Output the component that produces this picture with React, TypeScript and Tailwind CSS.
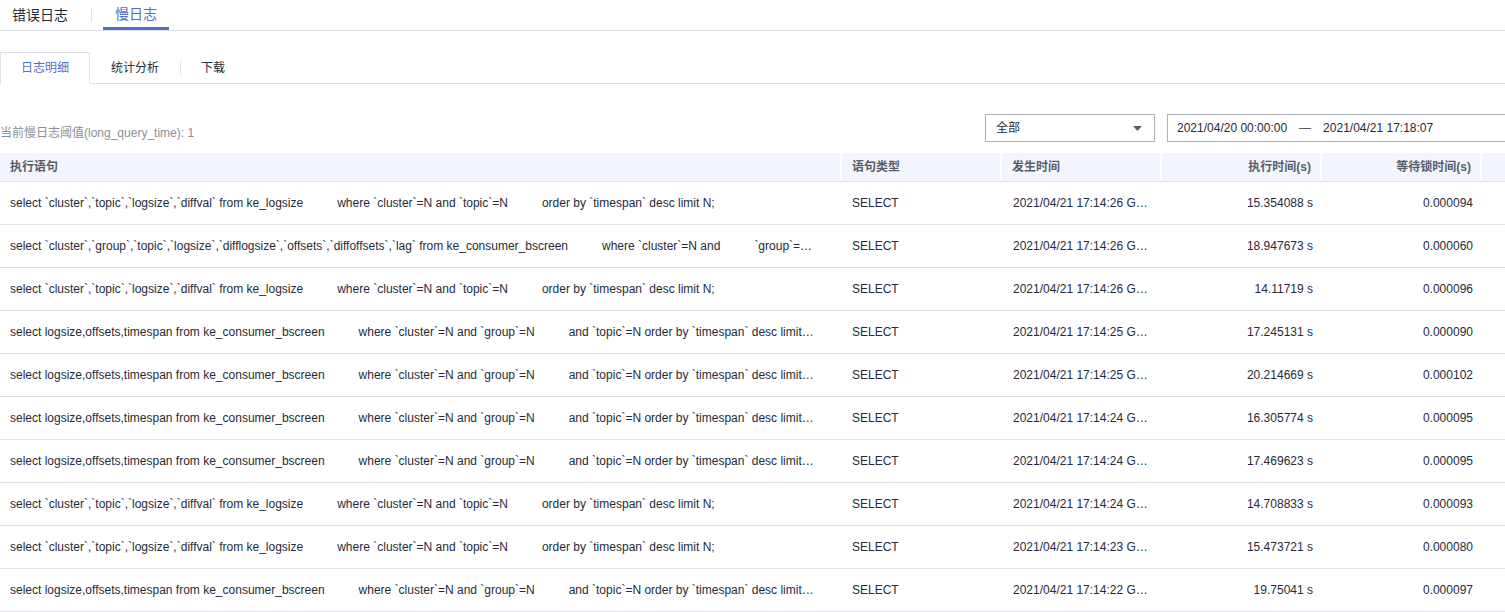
import React from 'react'

const A = [
  'select `cluster`,`topic`,`logsize`,`diffval` from ke_logsize',
  'where `cluster`=N and `topic`=N',
  'order by `timespan` desc limit N;',
]
const B = [
  'select `cluster`,`group`,`topic`,`logsize`,`difflogsize`,`offsets`,`diffoffsets`,`lag` from ke_consumer_bscreen',
  'where `cluster`=N and',
  '`group`=N and',
  '`topic`=N order by `timespan` desc limit N;',
]
const C = [
  'select logsize,offsets,timespan from ke_consumer_bscreen',
  'where `cluster`=N and `group`=N',
  'and `topic`=N order by `timespan` desc limit N;',
]

const rows = [
  { sql: A, time: '17:14:26', exec: '15.354088 s', lock: '0.000094' },
  { sql: B, time: '17:14:26', exec: '18.947673 s', lock: '0.000060' },
  { sql: A, time: '17:14:26', exec: '14.11719 s', lock: '0.000096' },
  { sql: C, time: '17:14:25', exec: '17.245131 s', lock: '0.000090' },
  { sql: C, time: '17:14:25', exec: '20.214669 s', lock: '0.000102' },
  { sql: C, time: '17:14:24', exec: '16.305774 s', lock: '0.000095' },
  { sql: C, time: '17:14:24', exec: '17.469623 s', lock: '0.000095' },
  { sql: A, time: '17:14:24', exec: '14.708833 s', lock: '0.000093' },
  { sql: A, time: '17:14:23', exec: '15.473721 s', lock: '0.000080' },
  { sql: C, time: '17:14:22', exec: '19.75041 s', lock: '0.000097' },
]

const font = "font-['Liberation_Sans','Noto_Sans_CJK_SC',sans-serif]"

export default function App() {
  return (
    <div className={`w-full h-[612px] overflow-hidden bg-white text-[#252b3a] ${font}`}>
      {/* top tabs */}
      <div className="flex items-end h-[31px] border-b border-[#dfe1e6]">
        <div className="flex items-center h-full px-3 text-sm text-[#252b3a]">错误日志</div>
        <div className="w-px h-[14px] bg-[#dfe1e6] self-center mx-[11px]" />
        <div className="flex flex-col h-full">
          <div className="flex-1 flex items-center px-3 text-sm text-[#526ecc]">慢日志</div>
          <div className="h-[3px] bg-[#526ecc]" />
        </div>
      </div>

      {/* sub tabs */}
      <div className="flex items-end mt-[21px] h-[32px] border-b border-[#dfe1e6] text-xs">
        <div className="flex items-center justify-center w-[90px] h-[32px] -mb-px bg-white border border-[#dfe1e6] border-b-white text-[#526ecc]">
          日志明细
        </div>
        <div className="flex items-center h-full pl-[21px] pr-[21px]">统计分析</div>
        <div className="w-px h-[14px] bg-[#dfe1e6] self-center" />
        <div className="flex items-center h-full pl-[20px]">下载</div>
      </div>

      {/* filters */}
      <div className="flex items-end justify-between mt-[30px] h-[28px]">
        <div className="text-xs text-[#8a8e99] leading-[20px] -mb-[1px]">当前慢日志阈值(long_query_time): 1</div>
        <div className="flex gap-3 -mr-[40px]">
          <div className="flex items-center justify-between w-[170px] h-[28px] border border-[#adb0b8] px-[10px] text-xs">
            <span>全部</span>
            <svg width="9" height="5" viewBox="0 0 9 5" className="mr-[2px]">
              <path d="M0 0 L9 0 L4.5 5 Z" fill="#575d6c" />
            </svg>
          </div>
          <div className="flex items-center w-[378px] h-[28px] border border-[#adb0b8] px-[9px] text-xs">
            <span>2021/04/20 00:00:00</span>
            <span className="mx-[12px] text-[#575d6c]">—</span>
            <span>2021/04/21 17:18:07</span>
          </div>
        </div>
      </div>

      {/* table */}
      <div className="mt-[11px] text-xs">
        <div className="flex h-[29px] bg-[#f2f5fc] border-b border-[#dfe1e6] text-[#575d6c] font-semibold">
          <div className="w-[842px] flex items-center px-[10px] border-r-2 border-white">执行语句</div>
          <div className="w-[160px] flex items-center px-[10px] border-r-2 border-white">语句类型</div>
          <div className="w-[160px] flex items-center px-[10px] border-r-2 border-white">发生时间</div>
          <div className="w-[160px] flex items-center justify-end px-[9px] border-r-2 border-white">执行时间(s)</div>
          <div className="w-[160px] flex items-center justify-end px-[9px] border-r-2 border-white">等待锁时间(s)</div>
          <div className="flex-1" />
        </div>
        {rows.map((r, i) => (
          <div key={i} className="flex h-[43px] border-b border-[#dfe1e6] items-center">
            <div className="w-[842px] pl-[10px] pr-[26px] truncate">
              {r.sql.map((s, j) => (
                <span key={j} className={j > 0 ? 'ml-[34px]' : ''}>
                  {s}
                </span>
              ))}
            </div>
            <div className="w-[160px] px-[10px]">SELECT</div>
            <div className="w-[160px] pl-[11px] pr-[14px] truncate">2021/04/21 {r.time} GMT+08:00</div>
            <div className="w-[160px] px-[9px] text-right">{r.exec}</div>
            <div className="w-[160px] px-[9px] text-right">{r.lock}</div>
            <div className="flex-1" />
          </div>
        ))}
      </div>
    </div>
  )
}
